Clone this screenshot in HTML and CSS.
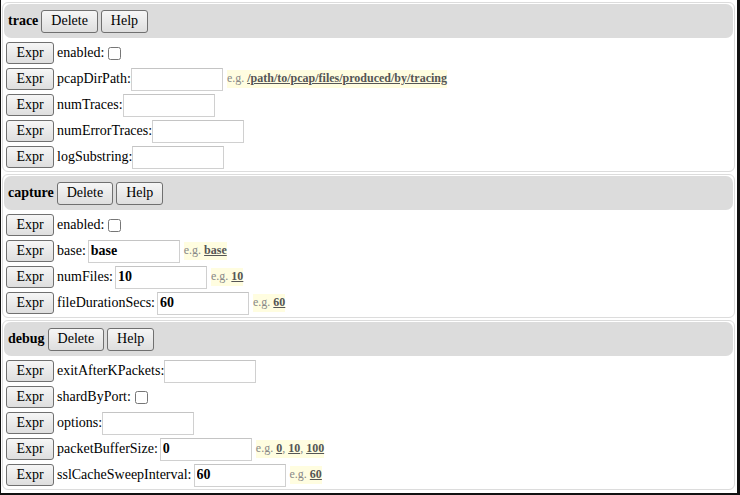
FILE: index.html
```html
<!DOCTYPE html>
<html>
<head>
<meta charset="utf-8">
<link rel="stylesheet" href="styles.css">
</head>
<body>
<div class="frame">
  <div class="section">
    <div class="head"><span class="title">trace</span><button class="btn hbtn">Delete</button><button class="btn hbtn">Help</button></div>
    <div class="row"><button class="btn expr">Expr</button><span class="lbl">enabled:</span><input type="checkbox" class="chk"></div>
    <div class="row"><button class="btn expr">Expr</button><span class="lbl">pcapDirPath:</span><input class="inp" type="text"><span class="hint">e.g. <a class="ex">/path/to/pcap/files/produced/by/tracing</a></span></div>
    <div class="row"><button class="btn expr">Expr</button><span class="lbl">numTraces:</span><input class="inp" type="text"></div>
    <div class="row"><button class="btn expr">Expr</button><span class="lbl">numErrorTraces:</span><input class="inp" type="text"></div>
    <div class="row"><button class="btn expr">Expr</button><span class="lbl">logSubstring:</span><input class="inp" type="text"></div>
  </div>
  <div class="section">
    <div class="head"><span class="title">capture</span><button class="btn hbtn">Delete</button><button class="btn hbtn">Help</button></div>
    <div class="row"><button class="btn expr">Expr</button><span class="lbl">enabled:</span><input type="checkbox" class="chk"></div>
    <div class="row"><button class="btn expr">Expr</button><span class="lbl gap">base:</span><input class="inp" type="text" value="base"><span class="hint">e.g. <a class="ex">base</a></span></div>
    <div class="row"><button class="btn expr">Expr</button><span class="lbl gap">numFiles:</span><input class="inp" type="text" value="10"><span class="hint">e.g. <a class="ex">10</a></span></div>
    <div class="row"><button class="btn expr">Expr</button><span class="lbl gap">fileDurationSecs:</span><input class="inp" type="text" value="60"><span class="hint">e.g. <a class="ex">60</a></span></div>
  </div>
  <div class="section">
    <div class="head"><span class="title">debug</span><button class="btn hbtn">Delete</button><button class="btn hbtn">Help</button></div>
    <div class="row"><button class="btn expr">Expr</button><span class="lbl">exitAfterKPackets:</span><input class="inp" type="text"></div>
    <div class="row"><button class="btn expr">Expr</button><span class="lbl">shardByPort:</span><input type="checkbox" class="chk"></div>
    <div class="row"><button class="btn expr">Expr</button><span class="lbl">options:</span><input class="inp" type="text"></div>
    <div class="row"><button class="btn expr">Expr</button><span class="lbl gap">packetBufferSize:</span><input class="inp" type="text" value="0"><span class="hint">e.g. <a class="ex">0</a>, <a class="ex">10</a>, <a class="ex">100</a></span></div>
    <div class="row"><button class="btn expr">Expr</button><span class="lbl gap">sslCacheSweepInterval:</span><input class="inp" type="text" value="60"><span class="hint">e.g. <a class="ex">60</a></span></div>
  </div>
</div>
</body>
</html>
```
FILE: styles.css
```css
html, body {
  margin: 0;
  padding: 0;
  background: #fff;
}
body {
  font-family: "Liberation Serif", "Times New Roman", serif;
  font-size: 14px;
  color: #000;
}
.frame {
  box-sizing: border-box;
  width: 740px;
  height: 495px;
  border-left: 1px solid #111;
  border-right: 3px solid #111;
  border-bottom: 2px solid #111;
  padding-top: 2px;
  overflow: hidden;
}
.section {
  margin: 0 2px 2px 1px;
  border: 1px solid #dcdcdc;
  border-radius: 6px;
  padding: 1px;
}
.head {
  display: flex;
  align-items: center;
  height: 34px;
  background: #dcdcdc;
  border-radius: 7px;
  padding-left: 4px;
  margin-bottom: 2px;
}
.title {
  font-weight: bold;
  font-size: 14px;
  margin-right: 3px;
}
.btn {
  font-family: "Liberation Serif", "Times New Roman", serif;
  font-size: 14px;
  color: #000;
  background: linear-gradient(#f6f6f6, #dedede);
  border: 1px solid #707070;
  border-radius: 3px;
  padding: 0 9px;
  margin: 0;
  box-sizing: border-box;
}
.hbtn {
  height: 23px;
  margin-right: 3px;
}
.row {
  display: flex;
  align-items: center;
  height: 26px;
  white-space: nowrap;
}
.expr {
  height: 22px;
  width: 48px;
  padding: 0;
  margin-left: 2px;
  margin-right: 3px;
}
.lbl {
  font-size: 14px;
}
.gap {
  padding-right: 2px;
}
.chk {
  width: 13px;
  height: 13px;
  margin: 0 0 0 4px;
}
.inp {
  box-sizing: border-box;
  width: 92px;
  height: 23px;
  border: 1px solid #d0d0d0;
  border-top-color: #c4c4c4;
  padding: 0 2px;
  margin: 0;
  font-family: "Liberation Serif", "Times New Roman", serif;
  font-size: 14px;
  font-weight: bold;
  color: #000;
  outline: none;
}
.hint {
  margin-left: 4px;
  background: #fffde0;
  color: #888;
  font-size: 12px;
  padding: 1px 0 2px;
}
.ex {
  color: #555;
  font-weight: bold;
  text-decoration: underline;
}
```
